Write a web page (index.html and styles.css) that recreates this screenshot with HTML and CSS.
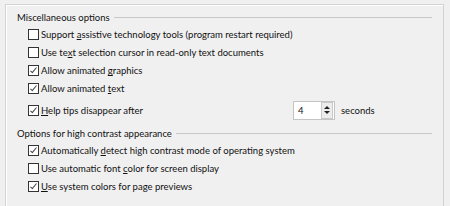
FILE: index.html
```html
<!DOCTYPE html>
<html lang="en">
<head>
    <meta charset="UTF-8">
    <title>Accessibility options</title>
    <link rel="stylesheet" href="styles.css">
</head>
<body>
    <div class="frame">
        <div class="group">
            <div class="legend"><span>Miscellaneous options</span><div class="rule"></div></div>
            <div class="opt"><span class="box"></span><span>Support <u>a</u>ssistive technology tools (program restart required)</span></div>
            <div class="opt"><span class="box"></span><span>Use te<u>x</u>t selection cursor in read-only text documents</span></div>
            <div class="opt"><span class="box checked"></span><span>Allow animated <u>g</u>raphics</span></div>
            <div class="opt"><span class="box checked"></span><span>Allow animated <u>t</u>ext</span></div>
            <div class="opt tips">
                <span class="box checked"></span><span class="tips-label"><u>H</u>elp tips disappear after</span>
                <div class="spin">
                    <span class="spin-value">4</span>
                    <div class="spin-btns">
                        <span class="arrow up"></span>
                        <span class="arrow down"></span>
                    </div>
                </div>
                <span class="unit">seconds</span>
            </div>
        </div>
        <div class="group">
            <div class="legend"><span>Options for high contrast appearance</span><div class="rule"></div></div>
            <div class="opt"><span class="box checked"></span><span>Automatically <u>d</u>etect high contrast mode of operating system</span></div>
            <div class="opt"><span class="box"></span><span>Use automatic font <u>c</u>olor for screen display</span></div>
            <div class="opt"><span class="box checked"></span><span><u>U</u>se system colors for page previews</span></div>
        </div>
    </div>
</body>
</html>
```

FILE: styles.css
```css
html, body {
    height: 100%;
}
body {
    margin: 0;
    background: #f0f0f0;
    font-family: Lato, "Noto Sans", Arial, sans-serif;
    font-size: 9.5px;
    color: #111;
    overflow: hidden;
}
u {
    text-underline-offset: 1px;
    text-decoration-skip-ink: none;
}
.frame {
    box-sizing: border-box;
    margin: 4px 0 0 5px;
    width: 439px;
    height: calc(100% - 4px);
    border: 1px solid #d3d3d3;
    border-bottom: none;
    box-shadow: inset 1px 1px 0 #fff;
    padding: 5px 0 0 11px;
}
.legend {
    display: flex;
    align-items: center;
    height: 15px;
}
.rule {
    flex: 1;
    height: 1px;
    background: #c8c8c8;
    margin: 0 11px 0 4px;
}
.opt {
    display: flex;
    align-items: center;
    height: 18px;
    padding-left: 11px;
}
.box {
    flex: none;
    width: 9px;
    height: 9px;
    border: 1px solid #333;
    background: #fff;
    margin-right: 2px;
    position: relative;
}
.box.checked::after {
    content: "";
    position: absolute;
    left: 3px;
    top: 0px;
    width: 2px;
    height: 6px;
    border: solid #444;
    border-width: 0 1px 1px 0;
    transform: rotate(40deg);
}
.tips {
    height: 26px;
}
.tips-label {
    width: 252px;
}
.spin {
    box-sizing: border-box;
    display: flex;
    align-items: center;
    width: 42px;
    height: 19px;
    border: 1px solid #c4c4c4;
    background: #fff;
    padding: 0 1px 0 4px;
}
.spin-value {
    flex: 1;
}
.spin-btns {
    display: flex;
    flex-direction: column;
    justify-content: center;
    align-items: center;
    width: 10px;
    height: 15px;
    border: 1px solid #c9c9c9;
    background: #ececec;
}
.arrow {
    width: 0;
    height: 0;
    border-left: 3px solid transparent;
    border-right: 3px solid transparent;
    margin: 1px 0;
}
.arrow.up {
    border-bottom: 3px solid #222;
}
.arrow.down {
    border-top: 3px solid #222;
}
.unit {
    margin-left: 6px;
}
.group + .group {
    margin-top: 3px;
}
```
